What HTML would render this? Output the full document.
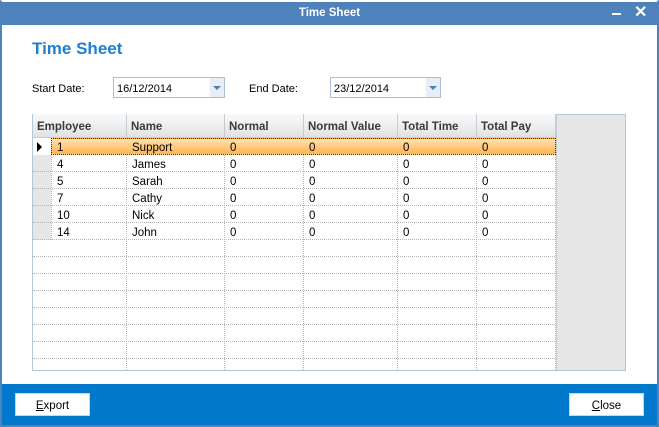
<!DOCTYPE html>
<html><head><style>
*{margin:0;padding:0;box-sizing:border-box}
body{width:659px;height:427px;background:#fff;position:relative;overflow:hidden;font-family:"Liberation Sans",Arial,sans-serif;font-size:11px;color:#000}
.a{position:absolute}
.t{white-space:nowrap}
.m{margin-top:1px}
.hd{position:absolute;top:114px;height:24px;background:linear-gradient(#fafafa,#e0e2e5);border-right:1px solid #c5ccd4;border-bottom:1px solid #c5ccd4;font-weight:bold;color:#3a3a3a;padding:7px 0 0 4px;font-size:11.5px}
.vl{position:absolute;width:0;border-left:1px dotted #b5b5b5}
.hl{position:absolute;height:0;border-top:1px dotted #b5b5b5;left:33px;width:522px}
.c{position:absolute;font-size:11.5px;margin-top:2px}
</style></head><body>
<div class="a" style="left:0;top:0;width:659px;height:427px;border:2px solid #4f81bd;border-top:1px solid #fff"></div>
<div class="a" style="left:2px;top:2px;width:655px;height:23px;background:#4f81bd"></div>
<div class="a t" style="left:0;top:7px;width:659px;text-align:center;color:#fff;font-weight:bold;font-size:11.5px">Time Sheet</div>
<div class="a" style="left:612px;top:13px;width:9px;height:2px;background:#fff"></div>
<div class="a t" style="left:634px;top:2px;color:#fff;font-weight:bold;font-size:16px">✕</div>
<div class="a t" style="left:32px;top:39px;color:#1f7ed0;font-weight:bold;font-size:17px">Time Sheet</div>
<div class="a t m" style="left:32px;top:82px">Start Date:</div>
<div class="a t m" style="left:249px;top:82px">End Date:</div>
<div class="a" style="left:113px;top:77px;width:112px;height:21px;border:1px solid #a9bdd6;background:#fff"></div>
<div class="a" style="left:210px;top:78px;width:14px;height:19px;background:#e6eef8"></div>
<div class="a" style="left:213px;top:86px;border-left:4px solid transparent;border-right:4px solid transparent;border-top:4px solid #5a7ca8"></div>
<div class="a t m" style="left:117px;top:82px">16/12/2014</div>
<div class="a" style="left:330px;top:77px;width:111px;height:21px;border:1px solid #a9bdd6;background:#fff"></div>
<div class="a" style="left:426px;top:78px;width:14px;height:19px;background:#e6eef8"></div>
<div class="a" style="left:429px;top:86px;border-left:4px solid transparent;border-right:4px solid transparent;border-top:4px solid #5a7ca8"></div>
<div class="a t m" style="left:334px;top:82px">23/12/2014</div>

<div class="a" style="left:32px;top:114px;width:594px;height:257px;border:1px solid #b7c6d4;background:#fff"></div>
<div class="a" style="left:556px;top:115px;width:69px;height:255px;background:#e6e6e6;border-left:1px solid #c5ccd4"></div>
<div class="hd t" style="left:33px;width:94px">Employee</div>
<div class="hd t" style="left:127px;width:98px">Name</div>
<div class="hd t" style="left:225px;width:79px">Normal</div>
<div class="hd t" style="left:304px;width:94px">Normal Value</div>
<div class="hd t" style="left:398px;width:79px">Total Time</div>
<div class="hd t" style="left:477px;width:79px">Total Pay</div>
<div class="a" style="left:33px;top:155px;width:18px;height:85px;background:#e6e6e6"></div>
<div class="a" style="left:51px;top:138px;width:505px;height:17px;background:linear-gradient(#ffe2b3,#ffb451);border:1px dotted #333"></div>
<div class="a" style="left:37px;top:142px;border-top:5px solid transparent;border-bottom:5px solid transparent;border-left:5px solid #000"></div>
<div class="vl" style="left:51px;top:155px;height:85px"></div>
<div class="vl" style="left:126px;top:155px;height:215px"></div>
<div class="vl" style="left:224px;top:155px;height:215px"></div>
<div class="vl" style="left:303px;top:155px;height:215px"></div>
<div class="vl" style="left:397px;top:155px;height:215px"></div>
<div class="vl" style="left:476px;top:155px;height:215px"></div>
<div class="vl" style="left:555px;top:155px;height:215px"></div>
<div class="hl" style="top:171px"></div><div class="hl" style="top:188px"></div><div class="hl" style="top:205px"></div><div class="hl" style="top:222px"></div><div class="hl" style="top:239px"></div><div class="hl" style="top:256px"></div><div class="hl" style="top:273px"></div><div class="hl" style="top:290px"></div><div class="hl" style="top:307px"></div><div class="hl" style="top:324px"></div><div class="hl" style="top:341px"></div><div class="hl" style="top:358px"></div>

<div class="c t" style="left:57px;top:140px">1</div><div class="c t" style="left:132px;top:140px">Support</div><div class="c t" style="left:230px;top:140px">0</div><div class="c t" style="left:309px;top:140px">0</div><div class="c t" style="left:403px;top:140px">0</div><div class="c t" style="left:482px;top:140px">0</div>
<div class="c t" style="left:57px;top:157px">4</div><div class="c t" style="left:132px;top:157px">James</div><div class="c t" style="left:230px;top:157px">0</div><div class="c t" style="left:309px;top:157px">0</div><div class="c t" style="left:403px;top:157px">0</div><div class="c t" style="left:482px;top:157px">0</div>
<div class="c t" style="left:57px;top:174px">5</div><div class="c t" style="left:132px;top:174px">Sarah</div><div class="c t" style="left:230px;top:174px">0</div><div class="c t" style="left:309px;top:174px">0</div><div class="c t" style="left:403px;top:174px">0</div><div class="c t" style="left:482px;top:174px">0</div>
<div class="c t" style="left:57px;top:191px">7</div><div class="c t" style="left:132px;top:191px">Cathy</div><div class="c t" style="left:230px;top:191px">0</div><div class="c t" style="left:309px;top:191px">0</div><div class="c t" style="left:403px;top:191px">0</div><div class="c t" style="left:482px;top:191px">0</div>
<div class="c t" style="left:57px;top:208px">10</div><div class="c t" style="left:132px;top:208px">Nick</div><div class="c t" style="left:230px;top:208px">0</div><div class="c t" style="left:309px;top:208px">0</div><div class="c t" style="left:403px;top:208px">0</div><div class="c t" style="left:482px;top:208px">0</div>
<div class="c t" style="left:57px;top:225px">14</div><div class="c t" style="left:132px;top:225px">John</div><div class="c t" style="left:230px;top:225px">0</div><div class="c t" style="left:309px;top:225px">0</div><div class="c t" style="left:403px;top:225px">0</div><div class="c t" style="left:482px;top:225px">0</div>

<div class="a" style="left:2px;top:384px;width:655px;height:41px;background:#0078cc"></div>
<div class="a" style="left:15px;top:393px;width:75px;height:23px;background:#fff;border:1px solid #c8d6e6"></div>
<div class="a t" style="left:15px;top:400px;width:75px;text-align:center;font-size:11.5px"><u>E</u>xport</div>
<div class="a" style="left:569px;top:393px;width:75px;height:23px;background:#fff;border:1px solid #c8d6e6"></div>
<div class="a t" style="left:569px;top:400px;width:75px;text-align:center;font-size:11.5px"><u>C</u>lose</div>
</body></html>
